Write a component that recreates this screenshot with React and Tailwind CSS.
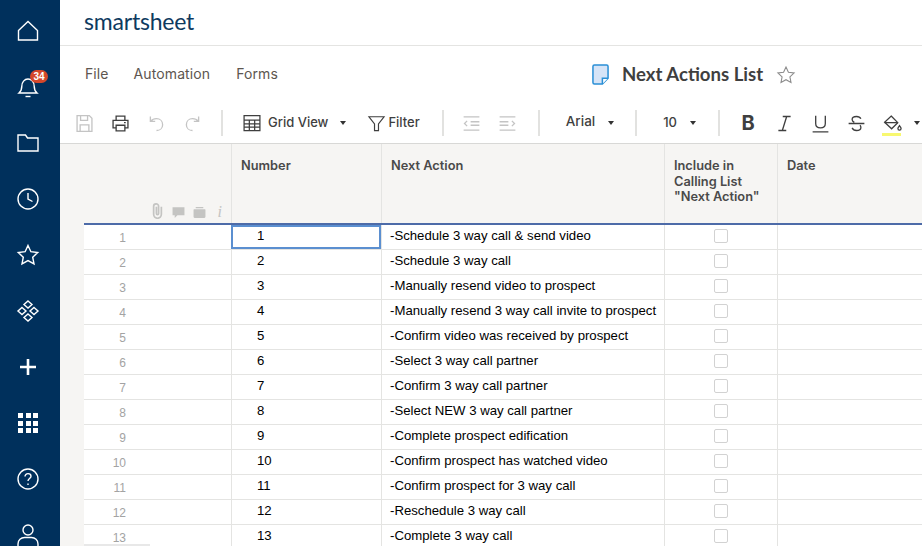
import React from 'react'

function Icon({ name, className = 'h-5 w-5', strokeWidth = 1.6 }) {
  const paths = {
    home: <path d="M2.500 11.500 12 2.500l9.500 9v9.500h-19Z" />,
    bell: (
      <>
        <path d="M3 18c1.800-1.600 2.800-3.400 2.800-6.800 0-4 2.600-7.200 6.200-7.200s6.200 3.200 6.200 7.200c0 3.400 1 5.200 2.800 6.800Z" />
        <path d="M9.500 21.500h5" />
      </>
    ),
    folder: <path d="M2 4h7.500l2 3H22v13H2Z" />,
    clock: (
      <>
        <circle cx="12" cy="12" r="10" />
        <path d="M12 6v6l4.500 2.500" />
      </>
    ),
    star: <path d="m12 2.500 2.900 6.200 6.800.9-5 4.600 1.300 6.700-6-3.300-6 3.300 1.300-6.700-5-4.600 6.800-.9Z" />,
    diamonds: (
      <>
        <path d="m12 2 4 3.500L12 9 8 5.500Z" />
        <path d="m12 15 4 3.500L12 22l-4-3.500Z" />
        <path d="m6 8.500 4 3.500-4 3.500L2 12Z" />
        <path d="m18 8.500 4 3.500-4 3.500-4-3.500Z" />
      </>
    ),
    plus: <path d="M12 4v16M4 12h16" />,
    help: (
      <>
        <circle cx="12" cy="12" r="10" />
        <path d="M9 9.500c0-1.700 1.300-2.900 3-2.900s3 1.100 3 2.600c0 2.300-3 2.400-3 4.800" />
        <path d="M12 16.500v1.500" />
      </>
    ),
    user: (
      <>
        <circle cx="12" cy="7" r="5" />
        <path d="M2 24v-3c0-4 3-6.500 6.500-6.500h7c3.500 0 6.500 2.500 6.500 6.500v3" />
      </>
    ),
    save: (
      <>
        <path d="M3.500 3h14l3 3v15h-17Z" />
        <path d="M7.500 3v5.500h8V3M7 21v-7.500h10V21" />
      </>
    ),
    print: (
      <>
        <path d="M7 8V3.500h10V8" />
        <path d="M7 17H3.500V8.500h17V17H17" />
        <path d="M7 14h10v6.500H7Z" />
        <path d="M16 11h2" />
      </>
    ),
    undo: <path d="M5 4v5.500h5.500M5.500 9.500C7 7.500 9 6.500 12 6.500c4 0 7 2.800 7 6.800s-3 6.700-7 6.700" />,
    redo: <path d="M19 4v5.500h-5.500M18.500 9.500C17 7.500 15 6.500 12 6.500c-4 0-7 2.800-7 6.800s3 6.700 7 6.700" />,
    grid: <path d="M2.500 3h19v18h-19ZM2.500 8.500h19M2.500 13h19M2.500 17h19M8.800 8.500V21M15.200 8.500V21" />,
    filter: <path d="M2.500 3.500h19l-7 9v8.500h-5v-8.500Z" />,
    outdent: <path d="M3 4.500h18M11 10h10M11 14h10M3 19.500h18M7 9l-3 3 3 3" />,
    indent: <path d="M3 4.500h18M3 10h10M3 14h10M3 19.500h18M17 9l3 3-3 3" />,
    italic: <path d="M10 4h9M5 20h9M14.500 4l-5 16" />,
    underline: <path d="M6.500 3v9c0 3.500 2 5 5.500 5s5.500-1.500 5.500-5V3M3 21.500h18" />,
    strike: <path d="M17 6.500C16 4.500 14.500 4 12 4 9 4 7 5.300 7 7.500c0 1.500 1 2.500 2.500 3.300M3 12h18M7 17c1 2.300 2.500 3 5 3 3 0 5-1.300 5-3.500 0-1-.4-1.800-1-2.500" />,
    fill: (
      <>
        <path d="m10.500 3.500 7.500 7.500-7 7-8-7.500Z" />
        <path d="M3 11h15" />
        <path d="M20 14.500c1 1.300 1.800 2.200 1.800 3.200a1.800 1.800 0 0 1-3.600 0c0-1 .8-1.900 1.800-3.200Z" />
      </>
    ),
  }

  return (
    <svg viewBox="0 0 24 24" aria-hidden="true" className={className} fill="none" stroke="currentColor" strokeWidth={strokeWidth}>
      {paths[name]}
    </svg>
  )
}

function AppsIcon() {
  return (
    <span className="grid h-5 w-5 grid-cols-3 gap-[2.500px]">
      {[0, 1, 2, 3, 4, 5, 6, 7, 8].map((i) => (
        <span key={i} className="bg-white" />
      ))}
    </span>
  )
}

function Caret({ className = '' }) {
  return <span className={`h-0 w-0 border-x-[3.500px] border-t-[4px] border-x-transparent border-t-[#333] ${className}`} />
}

function Sep({ className = '' }) {
  return <span className={`h-[26px] w-[2px] shrink-0 bg-[#e2e2e0] ${className}`} />
}

function ToolBtn({ name, muted, className = 'h-[21px] w-[21px]' }) {
  return (
    <span className={`flex w-9 shrink-0 items-center justify-center ${muted ? 'text-[#c4c4c4]' : 'text-[#3f3f3f]'}`}>
      <Icon name={name} className={className} strokeWidth={1.500} />
    </span>
  )
}

const navItems = ['home', 'bell', 'folder', 'clock', 'star', 'diamonds', 'plus', 'apps', 'help', 'user']

const rows = [
  '-Schedule 3 way call & send video',
  '-Schedule 3 way call',
  '-Manually resend video to prospect',
  '-Manually resend 3 way call invite to prospect',
  '-Confirm video was received by prospect',
  '-Select 3 way call partner',
  '-Confirm 3 way call partner',
  '-Select NEW 3 way call partner',
  '-Complete prospect edification',
  '-Confirm prospect has watched video',
  '-Confirm prospect for 3 way call',
  '-Reschedule 3 way call',
  '-Complete 3 way call',
]

function Sidebar() {
  return (
    <aside className="flex h-full w-[60px] shrink-0 flex-col items-center bg-[#00305c] pr-[4px] pt-[3px] text-white">
      {navItems.map((name) => (
        <div key={name} className="relative flex h-14 w-full shrink-0 items-center justify-center">
          {name === 'apps' ? <AppsIcon /> : <Icon name={name} className="h-6 w-6" strokeWidth={name === 'plus' ? 2.6 : 1.400} />}
          {name === 'bell' && (
            <span className="absolute left-[30px] top-[11px] flex h-[13px] w-[18px] items-center justify-center rounded-full bg-[#d4472b] font-['Liberation_Sans'] text-[10px] font-bold text-white">
              34
            </span>
          )}
        </div>
      ))}
    </aside>
  )
}

function Toolbar() {
  return (
    <div className="flex h-[43px] items-center pl-[6px] pt-[3px] font-['Inter'] text-[13px] font-medium text-[#3f3f3f]">
      <ToolBtn name="save" muted />
      <ToolBtn name="print" />
      <ToolBtn name="undo" muted />
      <ToolBtn name="redo" muted />
      <Sep className="ml-[11px]" />
      <span className="ml-[19px] text-[#3f3f3f]">
        <Icon name="grid" className="h-[20px] w-[20px]" strokeWidth={1.500} />
      </span>
      <span className="ml-[6px] whitespace-nowrap">Grid View</span>
      <Caret className="ml-[12px]" />
      <span className="ml-[21px] text-[#3f3f3f]">
        <Icon name="filter" className="h-[19px] w-[19px]" strokeWidth={1.500} />
      </span>
      <span className="ml-[2px]">Filter</span>
      <Sep className="ml-[22px]" />
      <span className="ml-[10px] flex">
        <ToolBtn name="outdent" muted />
        <ToolBtn name="indent" muted />
      </span>
      <Sep className="ml-[12px]" />
      <span className="ml-[26px] -mt-[3px] text-[13.500px]">Arial</span>
      <Caret className="ml-[13px]" />
      <Sep className="ml-[21px]" />
      <span className="ml-[26px]">10</span>
      <Caret className="ml-[13px]" />
      <Sep className="ml-[22px]" />
      <span className="ml-[10px] flex items-center">
        <span className="flex w-9 justify-center font-['Inter'] text-[20px] font-bold leading-none">B</span>
        <ToolBtn name="italic" />
        <ToolBtn name="underline" />
        <ToolBtn name="strike" />
        <span className="relative flex w-9 justify-center text-[#3f3f3f]">
          <Icon name="fill" className="h-[21px] w-[21px]" strokeWidth={1.500} />
          <span className="absolute left-[8px] top-[20px] h-[3px] w-[19px] bg-[#f8f870]" />
        </span>
      </span>
      <Caret className="ml-[4px] shrink-0" />
    </div>
  )
}

function HeaderCell({ width, children }) {
  return (
    <div className={`${width} shrink-0 border-l border-[#e4e4e2] pl-[9px] pt-[14px] font-['Inter'] text-[12.800px] font-semibold leading-[15.500px] text-[#4a4a4a]`}>
      {children}
    </div>
  )
}

function Grid() {
  return (
    <div className="relative min-h-0 flex-1 bg-[#f6f5f3]">
      <div className="flex h-[79px] pl-[24px]">
        <div className="flex w-[147px] shrink-0 items-end justify-end gap-[8px] pb-[4px] pr-[9px] text-[#c4c4c2]">
          <svg viewBox="5 1 14 22" aria-hidden="true" className="h-[17px] w-[13px]" fill="none" stroke="currentColor" strokeWidth="2.200">
            <path d="M17 7v10a5 5 0 0 1-10 0V6.500a3.200 3.200 0 0 1 6.400 0V16a1.400 1.400 0 0 1-2.800 0V7" />
          </svg>
          <svg viewBox="0 0 24 24" aria-hidden="true" className="h-[14px] w-[13px]" fill="currentColor">
            <path d="M1 3h22v15H10l-5 5v-5H1Z" />
          </svg>
          <svg viewBox="0 0 24 24" aria-hidden="true" className="h-[13px] w-[13px]" fill="currentColor">
            <path d="M5 2h14v2H5ZM2 6h20a1 1 0 0 1 1 1v13a2 2 0 0 1-2 2H3a2 2 0 0 1-2-2V7a1 1 0 0 1 1-1Z" />
          </svg>
          <span className="ml-[4px] font-['Liberation_Serif'] text-[16px] italic leading-[15px]">i</span>
        </div>
        <HeaderCell width="w-[150px]">Number</HeaderCell>
        <HeaderCell width="w-[283px]">Next Action</HeaderCell>
        <HeaderCell width="w-[113px]">
          Include in
          <br />
          Calling List
          <br />
          "Next Action"
        </HeaderCell>
        <HeaderCell width="flex-1">Date</HeaderCell>
      </div>
      <div className="ml-[24px] h-[2px] bg-[#4d6ba8]" />
      <div className="ml-[24px] bg-white">
        {rows.map((text, i) => (
          <div key={text} className="flex h-[25px] border-b border-[#e4e4e2] font-['Liberation_Sans'] text-[13.200px] text-black">
            <div className="w-[147px] shrink-0 pr-[105px] pt-[5px] text-right text-[12px] leading-[17px] text-[#a3a3a3]">{i + 1}</div>
            <div className={`w-[150px] shrink-0 ${i === 0 ? 'border-2 border-[#5b8fd0] pl-[24px] leading-[17px]' : 'border-l border-[#e4e4e2] pl-[25px] leading-[21px]'}`}>{i + 1}</div>
            <div className="w-[283px] shrink-0 whitespace-nowrap border-l border-[#e4e4e2] pl-[8px] leading-[21px]">{text}</div>
            <div className="flex w-[113px] shrink-0 justify-center border-l border-[#e4e4e2] pt-[4px]">
              <span className="h-[14px] w-[14px] rounded-[2px] border border-[#d2d2d2] bg-white" />
            </div>
            <div className="flex-1 border-l border-[#e4e4e2]" />
          </div>
        ))}
      </div>
      <span className="absolute bottom-0 left-[24px] h-[2px] w-[66px] bg-[#e8e8e8]" />
    </div>
  )
}

export default function App() {
  return (
    <div className="flex h-[546px] w-[922px] overflow-hidden bg-white">
      <Sidebar />
      <main className="flex min-w-0 flex-1 flex-col">
        <div className="flex h-[46px] shrink-0 items-center border-b border-[#e4e4e2] pb-[3px] pl-[24px] font-['Lato'] text-[23px] font-normal tracking-[-0.2px] text-[#0e3a5f]">
          smartsheet
        </div>
        <div className="flex h-[54px] shrink-0 items-center font-['Inter'] text-[14px] tracking-[0.1px] text-[#5d5650]">
          <span className="ml-[25px]">File</span>
          <span className="ml-[25px]">Automation</span>
          <span className="ml-[26px]">Forms</span>
          <span className="ml-[314px] mt-[3px] flex items-center">
            <svg viewBox="0 0 18 22" aria-hidden="true" className="h-[21px] w-[17px]" fill="#d6e4f7" stroke="#2a8fd6" strokeWidth="1.600">
              <path d="M2.500 1h13a1.500 1.500 0 0 1 1.500 1.500V15l-6 6H2.500A1.500 1.500 0 0 1 1 19.500v-17A1.500 1.500 0 0 1 2.500 1Z" />
              <path d="M17 15h-6v6" fill="#fff" />
            </svg>
            <span className="ml-[13px] mt-[1px] whitespace-nowrap font-['Lato'] text-[18.600px] font-bold tracking-normal text-[#3f3f3f]">Next Actions List</span>
            <span className="ml-[13px] mt-[1px] text-[#8c8c8c]">
              <Icon name="star" className="h-5 w-5" strokeWidth={1.300} />
            </span>
          </span>
        </div>
        <Toolbar />
        <div className="h-px shrink-0 bg-[#d8d8d6]" />
        <Grid />
      </main>
    </div>
  )
}
